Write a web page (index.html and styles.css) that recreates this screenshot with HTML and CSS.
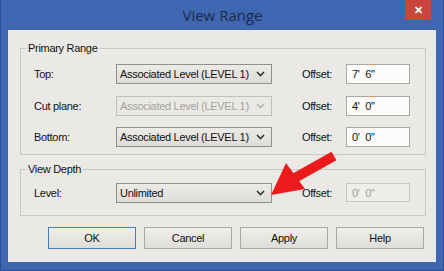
FILE: index.html
```html
<!DOCTYPE html>
<html lang="en">
<head>
    <meta charset="UTF-8">
    <title>View Range</title>
    <link rel="stylesheet" href="styles.css">
</head>
<body>
    <div class="window">
        <div class="titlebar">
            <span></span>
            <span class="title">View Range</span>
            <span class="close">&#x2715;</span>
        </div>

        <div class="client">
            <!-- Primary Range -->
            <fieldset class="group">
                <legend>Primary Range</legend>
                <div class="rows">
                    <div class="row">
                        <span class="label">Top:</span>
                        <div class="combo">
                            <span>Associated Level (LEVEL 1)</span>
                            <svg class="chev" width="9" height="6" viewBox="0 0 9 6"><polyline points="1,1 4.5,4.5 8,1" /></svg>
                        </div>
                        <span class="label offset">Offset:</span>
                        <div class="textbox">7'  6"</div>
                    </div>
                    <div class="row">
                        <span class="label">Cut plane:</span>
                        <div class="combo disabled">
                            <span>Associated Level (LEVEL 1)</span>
                            <svg class="chev" width="9" height="6" viewBox="0 0 9 6"><polyline points="1,1 4.5,4.5 8,1" /></svg>
                        </div>
                        <span class="label offset">Offset:</span>
                        <div class="textbox">4'  0"</div>
                    </div>
                    <div class="row">
                        <span class="label">Bottom:</span>
                        <div class="combo">
                            <span>Associated Level (LEVEL 1)</span>
                            <svg class="chev" width="9" height="6" viewBox="0 0 9 6"><polyline points="1,1 4.5,4.5 8,1" /></svg>
                        </div>
                        <span class="label offset">Offset:</span>
                        <div class="textbox">0'  0"</div>
                    </div>
                </div>
            </fieldset>

            <!-- View Depth -->
            <fieldset class="group depth">
                <legend>View Depth</legend>
                <div class="row">
                    <span class="label">Level:</span>
                    <div class="combo">
                        <span>Unlimited</span>
                        <svg class="chev" width="9" height="6" viewBox="0 0 9 6"><polyline points="1,1 4.5,4.5 8,1" /></svg>
                    </div>
                    <span class="label offset">Offset:</span>
                    <div class="textbox disabled">0'  0"</div>
                </div>
            </fieldset>

            <div class="buttons">
                <button class="btn default">OK</button>
                <button class="btn">Cancel</button>
                <button class="btn">Apply</button>
                <button class="btn">Help</button>
            </div>
        </div>

        <!-- annotation arrow -->
        <svg class="arrow" width="444" height="271" viewBox="0 0 444 271">
            <line x1="334" y1="156" x2="293" y2="179" />
            <polygon points="271,195 286,163 305,189" />
        </svg>
    </div>
</body>
</html>
```

FILE: styles.css
```css
* {
    margin: 0;
    padding: 0;
    box-sizing: border-box;
}

body {
    background: #3d64ae;
    font-family: 'Liberation Sans', Arial, sans-serif;
    font-size: 11px;
    letter-spacing: -0.3px;
    color: #111;
}

.window {
    position: relative;
    width: 444px;
    height: 271px;
    background: #3e66b1;
    border: 1px solid #2c4f94;
    border-top: none;
    padding: 0 7px 9px 7px;
}

.titlebar {
    height: 30px;
    display: grid;
    grid-template-columns: 1fr auto 1fr;
    align-items: start;
}

.title {
    font-family: 'Open Sans', 'Noto Sans', sans-serif;
    font-size: 15px;
    letter-spacing: 0;
    color: #1b2b4d;
    line-height: 30px;
    padding-left: 1px;
}

.close {
    justify-self: end;
    width: 26px;
    height: 20px;
    margin-right: 5px;
    background: #c8463b;
    color: #fff;
    font-size: 11px;
    font-weight: bold;
    letter-spacing: 0;
    line-height: 20px;
    text-align: center;
}

.client {
    height: 232px;
    background: #ebe9e5;
    padding: 12px 10px 11px 12px;
}

.group {
    border: 1px solid #cbc8c3;
    padding: 9px 0 7px 13px;
}

.group legend {
    line-height: 13px;
    padding: 0 2px;
    margin-left: -8px;
}

.group.depth {
    margin-top: 8px;
    padding-top: 7px;
    padding-bottom: 12px;
}

.rows {
    display: flex;
    flex-direction: column;
    gap: 11.5px;
}

.row {
    display: grid;
    grid-template-columns: 82px 156px 74px 64px;
    align-items: center;
    height: 20px;
}

.label.offset {
    padding-left: 30px;
}

.combo {
    height: 20px;
    display: flex;
    align-items: center;
    justify-content: space-between;
    padding: 0 6px 0 3px;
    background: linear-gradient(#edebe8, #dedcd8);
    border: 1px solid #8f8f8f;
}

.chev polyline {
    fill: none;
    stroke: #333;
    stroke-width: 1.6;
}

.combo.disabled {
    background: #ebe9e5;
    border-color: #c3c1bd;
    color: #a3a2a0;
}

.combo.disabled .chev polyline {
    stroke: #b5b4b2;
}

.textbox {
    height: 20px;
    line-height: 18px;
    padding-left: 5px;
    white-space: pre;
    background: #fcfbf9;
    border: 1px solid #a8a8a8;
}

.textbox.disabled {
    background: #efeeeb;
    border-color: #c9c7c3;
    color: #9d9c9a;
    height: 19px;
    margin-top: -1px;
}

.buttons {
    margin-top: 11px;
    display: flex;
    justify-content: flex-end;
    gap: 8px;
    padding-right: 2px;
}

.btn {
    width: 88px;
    height: 22px;
    font-family: inherit;
    font-size: 11px;
    letter-spacing: -0.3px;
    color: #111;
    background: linear-gradient(#efeeec, #dfddd9);
    border: 1px solid #acaaa7;
}

.btn.default {
    border-color: #3d7fc0;
}

.arrow {
    position: absolute;
    left: -1px;
    top: 0;
    pointer-events: none;
}

.arrow line {
    stroke: #ec1b1b;
    stroke-width: 10;
}

.arrow polygon {
    fill: #ec1b1b;
}
```
